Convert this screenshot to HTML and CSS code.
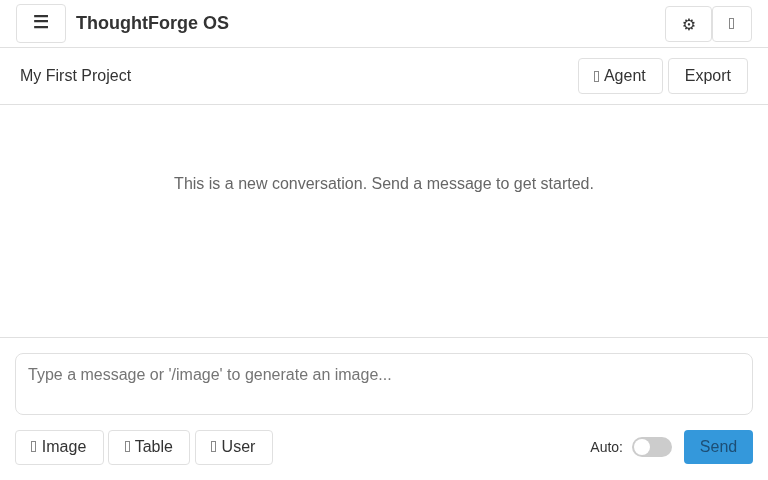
FILE: index.html
```html
<!DOCTYPE html>
<html lang="en">
<head>
<meta charset="utf-8">
<title>ThoughtForge OS</title>
<link rel="stylesheet" href="styles.css">
</head>
<body>
<div class="app">
  <header class="topbar">
    <div class="brand">
      <button class="btn btn-menu">☰</button>
      <h1 class="title">ThoughtForge OS</h1>
    </div>
    <div class="top-actions">
      <button class="btn btn-icon btn-gear">⚙</button>
      <button class="btn btn-icon btn-moon"><span class="tofu"></span></button>
    </div>
  </header>
  <div class="projectbar">
    <span class="project-name">My First Project</span>
    <div class="project-actions">
      <button class="btn btn-md"><span class="tofu"></span> Agent</button>
      <button class="btn btn-md">Export</button>
    </div>
  </div>
  <main class="messages">
    <p class="empty">This is a new conversation. Send a message to get started.</p>
  </main>
  <footer class="composer">
    <textarea class="input" placeholder="Type a message or '/image' to generate an image..."></textarea>
    <div class="composer-row">
      <div class="tools">
        <button class="btn btn-tool"><span class="tofu"></span> Image</button>
        <button class="btn btn-tool"><span class="tofu"></span> Table</button>
        <button class="btn btn-tool"><span class="tofu"></span> User</button>
      </div>
      <div class="send-group">
        <span class="auto-label">Auto:</span>
        <span class="toggle"><span class="knob"></span></span>
        <button class="btn-send">Send</button>
      </div>
    </div>
  </footer>
</div>
</body>
</html>
```
FILE: styles.css
```css
* { box-sizing: border-box; }
html, body { margin: 0; height: 100%; }
body {
  font-family: "Liberation Sans", Arial, sans-serif;
  color: #333;
  background: #fff;
  font-size: 16px;
}
.app { display: flex; flex-direction: column; height: 480px; overflow: hidden; will-change: transform; }
.topbar {
  height: 48px;
  flex: none;
  display: flex;
  align-items: center;
  justify-content: space-between;
  padding: 0 16px;
  border-bottom: 1px solid #e0e0e0;
}
.brand { display: flex; align-items: center; gap: 10px; }
.title { margin: 0; font-size: 18px; font-weight: 700; color: #333; }
.top-actions { display: flex; align-items: center; }
.btn {
  font-family: inherit;
  font-size: 16px;
  color: #333;
  background: #fff;
  border: 1px solid #e0e0e0;
  border-radius: 4px;
  padding: 0;
  display: inline-flex;
  align-items: center;
  justify-content: center;
  white-space: pre;
}
.tofu {
  display: inline-block;
  width: 5px;
  height: 11px;
  margin: 0 1px 0 -1px;
  border: 1px solid #888;
}
.btn-menu { width: 50px; height: 39px; padding-bottom: 2px; font-size: 18px; font-weight: 700; margin-bottom: 1px; }
.btn-icon { height: 36px; }
.btn-gear { width: 47px; padding: 1px 0 0 1px; font-size: 16px; font-family: "DejaVu Sans", sans-serif; }
.btn-moon { width: 40px; padding-bottom: 1px; }
.projectbar {
  height: 57px;
  flex: none;
  display: flex;
  align-items: center;
  justify-content: space-between;
  padding: 0 20px;
  border-bottom: 1px solid #e0e0e0;
}
.project-name { font-size: 16px; }
.project-actions { display: flex; gap: 5px; }
.btn-md { height: 36px; padding: 0 16px; }
.messages { flex: 1; padding: 70px 16px 0; }
.empty { margin: 0; text-align: center; color: #666; font-size: 16px; line-height: 18px; }
.composer {
  flex: none;
  height: 143px;
  border-top: 1px solid #e0e0e0;
  padding: 15px 15px 0;
}
.input {
  display: block;
  width: 100%;
  height: 62px;
  border: 1px solid #e0e0e0;
  border-radius: 8px;
  padding: 12px;
  font-family: inherit;
  font-size: 16px;
  line-height: 18px;
  color: #333;
  resize: none;
  outline: none;
}
.input::placeholder { color: #757575; opacity: 1; }
.composer-row {
  display: flex;
  align-items: center;
  justify-content: space-between;
  margin-top: 15px;
}
.tools { display: flex; gap: 4.45px; }
.btn-tool { height: 35px; padding: 0 16.4px 2px; }
.send-group { display: flex; align-items: center; align-self: flex-start; }
.auto-label { font-size: 14px; margin-right: 9px; }
.toggle {
  width: 40px;
  height: 20px;
  border-radius: 10px;
  background: #ccc;
  position: relative;
  margin-right: 12px;
}
.knob {
  position: absolute;
  left: 2px;
  top: 2px;
  width: 16px;
  height: 16px;
  border-radius: 50%;
  background: #fff;
}
.btn-send {
  font-family: inherit;
  font-size: 16px;
  width: 69px;
  height: 34px;
  padding: 0;
  border: 0;
  border-radius: 4px;
  background: #3498db;
  color: #1d4e75;
}
```
